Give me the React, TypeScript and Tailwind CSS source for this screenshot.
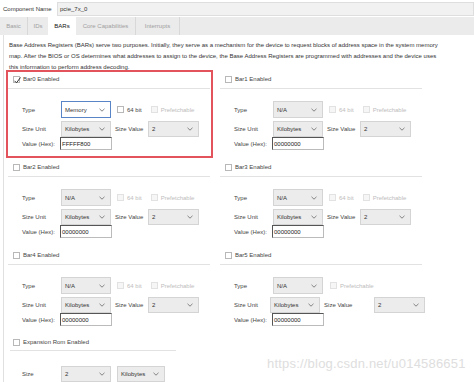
import React from "react";

const Chevron = () => (
  <svg width="6" height="4" viewBox="0 0 6 4" className="shrink-0">
    <path d="M0.5 0.8 L3 3.2 L5.5 0.8" fill="none" stroke="#777" strokeWidth="0.9" />
  </svg>
);

function Check({ checked = false, disabled = false }: { checked?: boolean; disabled?: boolean }) {
  return (
    <span
      className={
        "relative inline-block w-[7px] h-[7px] shrink-0 border " +
        (disabled ? "border-[#e2e2e2] bg-[#f6f6f6]" : "border-[#b8b8b8] bg-white")
      }
    >
      {checked && (
        <svg width="9" height="9" viewBox="0 0 9 9" className="absolute left-[-1px] top-[-1px]">
          <path d="M1.5 4.8 L3.5 6.8 L7.5 1.5" fill="none" stroke="#333" strokeWidth="1" />
        </svg>
      )}
    </span>
  );
}

function Select({ value, w = 50, h = 16, active = false }: { value: string; w?: number; h?: number; active?: boolean }) {
  return (
    <div
      style={{ width: w, height: h }}
      className={
        "flex items-center justify-between pl-[3px] pr-[5px] border shrink-0 " +
        (active ? "border-[#5a84c8] bg-white" : "border-[#d4d4d4] bg-[#ececec]")
      }
    >
      <span className="text-[#333]">{value}</span>
      <Chevron />
    </div>
  );
}

function Bar({
  n,
  checked = false,
  bar5 = false,
  typeVal = "N/A",
  hex = "00000000",
  active = false,
  highlight = false,
}: {
  n: number;
  checked?: boolean;
  bar5?: boolean;
  typeVal?: string;
  hex?: string;
  active?: boolean;
  highlight?: boolean;
}) {
  const enabledOpts = active;
  return (
    <div className={"h-[88px] w-[207px] flex flex-col " + (highlight ? "ring-2 ring-inset ring-[#e2535c]" : "")}>
      <div className="h-[18px] flex items-center pl-[7px] gap-[3px]">
        <Check checked={checked} />
        <span className="text-[#444]">Bar{n} Enabled</span>
      </div>
      <div className="ml-[2px] w-[202px] border-t border-[#e2e2e2]" />
      <div className="pt-[12px] pl-[16px] flex flex-col">
        <div className="h-[17px] flex items-center">
          <span className="w-[39px] text-[#444]">Type</span>
          <Select value={typeVal} h={17} active={active} />
          {!bar5 ? (
            <>
              <span className="ml-[6px]">
                <Check disabled={!enabledOpts} />
              </span>
              <span className={"ml-[3px] " + (enabledOpts ? "text-[#444]" : "text-[#bdbdbd]")}>64 bit</span>
              <span className="ml-[9px]">
                <Check disabled />
              </span>
              <span className="ml-[3px] text-[#bdbdbd]">Prefetchable</span>
            </>
          ) : (
            <>
              <span className="ml-[7px]">
                <Check disabled />
              </span>
              <span className="ml-[3px] text-[#bdbdbd]">Prefetchable</span>
            </>
          )}
        </div>
        <div className="h-[16px] mt-[3px] flex items-center">
          <span className="w-[39px] text-[#444]">Size Unit</span>
          <Select value="Kilobytes" h={16} />
          <span className="ml-[4px] text-[#444]" style={{ width: bar5 ? 54 : 33 }}>
            Size Value
          </span>
          <Select value="2" w={51} h={16} />
        </div>
        <div className="h-[13px] mt-[0px] flex items-center">
          <span className="w-[38px] text-[#444]">Value (Hex):</span>
          <div className="w-[52px] h-[13px] border border-[#bbb] border-t-[#555] border-l-[#555] bg-white flex items-center pl-[1px] text-[#222]">
            {hex}
          </div>
        </div>
      </div>
    </div>
  );
}

export default function App() {
  return (
    <div className="relative w-[474px] h-[382px] overflow-hidden bg-white font-['Liberation_Sans',Arial,sans-serif] text-[6px] leading-none">
      {/* header */}
      <div className="h-[17px] flex items-center">
        <span className="w-[57px] pl-[3px] text-[#333]">Component Name</span>
        <div className="flex-1 h-[14px] bg-[#f1f1f1] border border-[#dedede] flex items-center pl-[2px] text-[#333]">
          pcie_7x_0
        </div>
      </div>
      {/* tabs */}
      <div className="h-[18px] bg-[#ebebeb] flex items-stretch">
        <div className="w-[28px] flex items-center justify-center text-[#a0a0a0] border-r border-[#d8d8d8]">Basic</div>
        <div className="w-[20px] flex items-center justify-center text-[#a0a0a0]">IDs</div>
        <div className="w-[28px] flex items-center justify-center text-[#111] bg-white">BARs</div>
        <div className="w-[60px] flex items-center justify-center text-[#a0a0a0] border-r border-[#d8d8d8]">Core Capabilities</div>
        <div className="w-[44px] flex items-center justify-center text-[#a0a0a0] border-r border-[#d8d8d8]">Interrupts</div>
      </div>
      {/* panel */}
      <div className="ml-[3px] border-l border-[#e0e0e0] h-[347px]">
        <div className="pl-[5px] pt-[5px] h-[35px] leading-[11px] text-[#333] whitespace-nowrap">
          <div>
            Base Address Registers (BARs) serve two purposes. Initially, they serve as a mechanism for the device to request blocks of address space in the system memory
          </div>
          <div>
            map. After the BIOS or OS determines what addresses to assign to the device, the Base Address Registers are programmed with addresses and the device uses
          </div>
          <div>this information to perform address decoding.</div>
        </div>
        <div className="ml-[2px] grid grid-cols-[207px_207px] gap-x-[5px]">
          <Bar n={0} checked typeVal="Memory" hex="FFFFF800" active highlight />
          <Bar n={1} />
          <Bar n={2} />
          <Bar n={3} />
          <Bar n={4} />
          <Bar n={5} bar5 />
          <div className="h-[48px] w-[207px] flex flex-col">
            <div className="h-[19px] flex items-center pl-[7px] gap-[3px]">
              <Check />
              <span className="text-[#444]">Expansion Rom Enabled</span>
            </div>
            <div className="ml-[4px] w-[166px] border-t border-[#e2e2e2]" />
            <div className="pt-[15px] pl-[16px] flex items-center">
              <span className="w-[39px] text-[#444]">Size</span>
              <Select value="2" h={16} />
              <span className="ml-[6px]">
                <Select value="Kilobytes" w={48} h={16} />
              </span>
            </div>
          </div>
        </div>
      </div>
      <div className="absolute left-[267px] top-[357px] text-[13px] leading-none text-[#dedede] tracking-[0.2px]">
        https://blog.csdn.net/u014586651
      </div>
    </div>
  );
}
